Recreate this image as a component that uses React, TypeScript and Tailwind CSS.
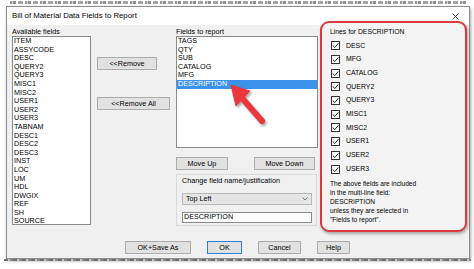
import React from "react"

const available = [
  "ITEM", "ASSYCODE", "DESC", "QUERY2", "QUERY3", "MISC1", "MISC2", "USER1", "USER2", "USER3", "TABNAM",
  "DESC1", "DESC2", "DESC3", "INST", "LOC", "UM", "HDL", "DWGIX", "REF", "SH", "SOURCE",
]

const reported = ["TAGS", "QTY", "SUB", "CATALOG", "MFG", "DESCRIPTION"]

const lines = ["DESC", "MFG", "CATALOG", "QUERY2", "QUERY3", "MISC1", "MISC2", "USER1", "USER2", "USER3"]

function Btn({ label, w, def }: { label: string; w: string; def?: boolean }) {
  return (
    <div
      className={`${w} h-[13px] flex items-center justify-center text-[7.2px] leading-none bg-[#e1e1e1] border ${
        def ? "border-[#2a7fd4]" : "border-[#adadad]"
      }`}
    >
      {label}
    </div>
  )
}

function Check() {
  return (
    <svg width="9" height="9" viewBox="0 0 9 9" className="shrink-0">
      <rect x="0.5" y="0.5" width="8" height="8" fill="#fff" stroke="#333" strokeWidth="1" />
      <path d="M1.8 4.6 L3.8 6.5 L7.3 2.4" fill="none" stroke="#222" strokeWidth="1" />
    </svg>
  )
}

export default function App() {
  return (
    <div className="relative w-[474px] h-[269px] bg-white overflow-hidden text-black font-['Liberation_Sans',Arial,sans-serif]">
      {/* torn edge of the page above */}
      <div className="h-[6px] pt-[1px] pl-[10px]">
        <div className="w-[458px] h-[3px] bg-[repeating-linear-gradient(90deg,#9a9a9a_0_2px,#d6d6d6_2px_3px,#8f8f8f_3px_6px,#ffffff_6px_8px,#a5a5a5_8px_13px,#ffffff_13px_15px)]" />
      </div>

      {/* Dialog */}
      <div className="ml-[6px] w-[464px] h-[253px] border border-[#8c8c8c] bg-[#f0f0f0] flex flex-col shadow-[1px_2px_3px_rgba(0,0,0,0.35)]">
        {/* Title bar */}
        <div className="h-[18px] bg-white flex items-center justify-between pl-[5px] pr-[10px]">
          <span className="text-[7.8px] leading-none">Bill of Material Data Fields to Report</span>
          <svg width="7" height="7" viewBox="0 0 7 7">
            <path d="M0.5 0.5 L6.5 6.5 M6.5 0.5 L0.5 6.5" stroke="#333" strokeWidth="0.9" />
          </svg>
        </div>

        {/* Body */}
        <div className="pt-[2px] pl-[5px] h-[207px] flex items-start text-[7.2px]">
          {/* Available fields */}
          <div className="w-[79px] flex flex-col">
            <div className="h-[9px] leading-[9px]">Available fields</div>
            <div className="h-[189px] bg-white border border-[#8a8a8a] pl-[1px] overflow-hidden">
              {available.map((f) => (
                <div key={f} className="h-[8.6px] leading-[8.6px]">
                  {f}
                </div>
              ))}
            </div>
          </div>

          {/* Remove buttons */}
          <div className="ml-[6px] w-[73px] pt-[30px] flex flex-col gap-[27px]">
            <Btn label="<<Remove" w="w-[60px]" />
            <Btn label="<<Remove All" w="w-[73px]" />
          </div>

          {/* Fields to report */}
          <div className="ml-[6px] w-[142px] flex flex-col">
            <div className="h-[9px] leading-[9px]">Fields to report</div>
            <div className="h-[112px] bg-white border border-[#8a8a8a] overflow-hidden">
              {reported.map((f) => (
                <div
                  key={f}
                  className={`h-[8.6px] leading-[8.6px] pl-[1px] ${
                    f === "DESCRIPTION" ? "bg-[#3a92ea] text-white" : ""
                  }`}
                >
                  {f}
                </div>
              ))}
            </div>
            <div className="mt-[9px] w-[139px] flex justify-between">
              <Btn label="Move Up" w="w-[52px]" />
              <Btn label="Move Down" w="w-[61px]" />
            </div>
            <div className="mt-[4px] w-[141px] h-[52px] border border-[#d9d9d9] pl-[5px] flex flex-col">
              <div className="mt-[1px] h-[9px] leading-[9px]">Change field name/justification</div>
              <div className="mt-[8px] w-[130px] h-[12px] bg-[#e5e5e5] border border-[#b9b9b9] flex items-center justify-between px-[3px]">
                <span>Top Left</span>
                <svg width="6" height="4" viewBox="0 0 6 4">
                  <path d="M0.5 0.5 L3 3 L5.5 0.5" fill="none" stroke="#555" strokeWidth="0.8" />
                </svg>
              </div>
              <div className="mt-[7px] w-[130px] h-[11px] bg-white border border-[#8a8a8a] flex items-center px-[1px]">
                DESCRIPTION
              </div>
            </div>
          </div>

          {/* Lines for DESCRIPTION (highlighted) */}
          <div className="relative z-10 ml-[2px] mt-[-6px] w-[147px] h-[211px] border-2 border-[#d83a40] rounded-[9px] bg-[#f3f3f3] shadow-[1px_2px_3px_rgba(0,0,0,0.3)] pl-[8px] pt-[4px] flex flex-col">
            <div className="h-[9px] leading-[9px] text-[6.8px]">Lines for DESCRIPTION</div>
            <div className="mt-[3px] flex flex-col">
              {lines.map((l) => (
                <div key={l} className="h-[13.7px] flex items-center gap-[6px] pl-[1px] text-[6.9px]">
                  <Check />
                  <span>{l}</span>
                </div>
              ))}
            </div>
            <div className="mt-[3px] text-[6.6px] leading-[9.1px]">
              <div>The above fields are included</div>
              <div>in the multi-line field:</div>
              <div>DESCRIPTION</div>
              <div>unless they are selected in</div>
              <div>"Fields to report".</div>
            </div>
          </div>
        </div>

        {/* Bottom buttons */}
        <div className="mt-[9px] pl-[118px] flex gap-[16px] text-[7.2px]">
          <Btn label="OK+Save As" w="w-[66px]" />
          <Btn label="OK" w="w-[35px]" def />
          <Btn label="Cancel" w="w-[43px]" />
          <Btn label="Help" w="w-[33px]" />
        </div>
      </div>

      {/* torn bottom edge */}
      <div className="ml-[4px] w-[467px] h-[2px] bg-[repeating-linear-gradient(90deg,#6f6f6f_0_4px,#c4c4c4_4px_6px,#8a8a8a_6px_9px)]" />

      {/* Red arrow annotation */}
      <svg className="absolute left-0 top-0 pointer-events-none" width="474" height="269" viewBox="0 0 474 269">
        <defs>
          <filter id="sh" x="-50%" y="-50%" width="200%" height="200%">
            <feDropShadow dx="1.5" dy="2" stdDeviation="1.2" floodColor="#000" floodOpacity="0.35" />
          </filter>
        </defs>
        <g filter="url(#sh)" fill="#e8383d" stroke="#e8383d">
          <line x1="242" y1="98" x2="262" y2="121" strokeWidth="6" strokeLinecap="round" />
          <polygon points="231,85 250,91 236,106" strokeWidth="1" strokeLinejoin="round" />
        </g>
      </svg>
    </div>
  )
}
